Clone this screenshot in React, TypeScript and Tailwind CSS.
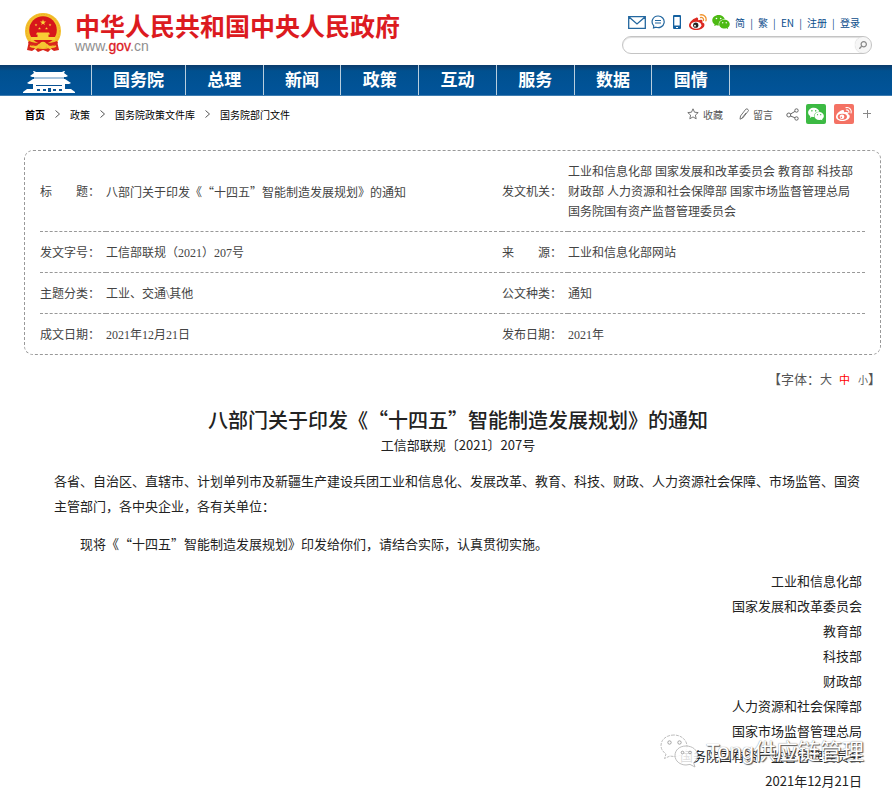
import React from "react";
import { FaSearch } from "react-icons/fa";
import { AiFillWechat } from "react-icons/ai";

const navItems = ["国务院", "总理", "新闻", "政策", "互动", "服务", "数据", "国情"];

const crumbs = ["首页", "政策", "国务院政策文件库", "国务院部门文件"];

const metaRows = [
  [
    "标　　题：",
    "八部门关于印发《“十四五”智能制造发展规划》的通知",
    "发文机关：",
    "工业和信息化部 国家发展和改革委员会 教育部 科技部\n财政部 人力资源和社会保障部 国家市场监督管理总局\n国务院国有资产监督管理委员会",
  ],
  ["发文字号：", "工信部联规（2021）207号", "来　　源：", "工业和信息化部网站"],
  ["主题分类：", "工业、交通\\其他", "公文种类：", "通知"],
  ["成文日期：", "2021年12月21日", "发布日期：", "2021年"],
];

const signers = [
  "工业和信息化部",
  "国家发展和改革委员会",
  "教育部",
  "科技部",
  "财政部",
  "人力资源和社会保障部",
  "国家市场监督管理总局",
  "国务院国有资产监督管理委员会",
  "2021年12月21日",
];

/* Sets full-width quotes in the CJK face while digits and spaces use the serif face. */
function Quoted({ text }: { text: string }) {
  return (
    <>
      {text.split(/([“”])/).map((part, i) =>
        part === "“" || part === "”" ? (
          <span key={i} className="font-['Noto_Sans_CJK_SC',sans-serif]">
            {part}
          </span>
        ) : (
          part
        ),
      )}
    </>
  );
}

function Emblem() {
  const star = "M0-1 .22-.31H.95L.36.12.59.81 0 .38-.59.81-.36.12-.95-.31H-.22Z";
  return (
    <svg viewBox="0 0 38 40" className="h-10 w-[38px]" aria-hidden="true">
      <path d="M5 28 3 37l5 1 3-2 3 3 5-2 5 2 3-3 3 2 5-1-2-9Z" fill="#d9261c" />
      <circle cx="19" cy="18" r="18" fill="#f3c02c" />
      <circle cx="19" cy="18" r="16.6" fill="none" stroke="#e9aa22" strokeWidth=".8" strokeDasharray="1.5 1.2" />
      <circle cx="19" cy="17" r="13.8" fill="#d7161b" />
      <path d={star} fill="#fbd83a" transform="translate(19 9.5) scale(3.2)" />
      <path d={star} fill="#fbd83a" transform="translate(12 12) scale(1.5)" />
      <path d={star} fill="#fbd83a" transform="translate(26 12) scale(1.5)" />
      <path d={star} fill="#fbd83a" transform="translate(15.5 15.5) scale(1.5)" />
      <path d={star} fill="#fbd83a" transform="translate(22.5 15.5) scale(1.5)" />
      <path d="M13 19.500h12l1 2h-1.500v2.500H31v3H7v-3h6.500v-2.500H12Z" fill="#f8cd35" />
      <path d="M5 28c6 3 22 3 28 0l1 2c-3 2-6 3-9 3l-6-2-6 2c-3 0-6-1-9-3Z" fill="#d9261c" />
      <path d="M6 33c4 2 8 1 9-1l4-2 4 2c1 2 5 3 9 1M11 36l4-3M27 36l-4-3" fill="none" stroke="#f6c632" strokeWidth="1.8" />
      <circle cx="19" cy="32" r="3.2" fill="#f6c632" />
    </svg>
  );
}

function Gate() {
  return (
    <svg viewBox="0 0 52 22" className="h-[22px] w-[52px]" aria-hidden="true">
      <path d="M10 0h1l2 1h26l2-1h1l-1 2 4 3-2 1H9L7 5l4-3Z" fill="#fff" />
      <path d="M11 6h30v2H11Z" fill="#a9c5dd" />
      <path d="M10 8h32l6 4-2 1H6l-2-1Z" fill="#fff" />
      <path d="M10 13h32v5H10Z" fill="#fff" />
      <path d="M4 18h44l4 3v1H0v-1Z" fill="#fff" />
      <path d="M13 14h26v1H13ZM14 18h3v2h-3ZM20 18h3v2h-3ZM25 17h3v4h-3ZM30 18h3v2h-3ZM36 18h3v2h-3Z" fill="#0a5293" />
    </svg>
  );
}

function Weibo({ mono, className }: { mono?: boolean; className: string }) {
  const body = mono ? "#fff" : "#dc2a22";
  const wave = mono ? "#fff" : "#f0922b";
  return (
    <svg viewBox="0 0 24 21" className={className} aria-hidden="true">
      <path
        d="M9 5c2-1 4 0 3 3 3-1 6-1 6 1 0 1-.5 1.500 0 2 2 .5 3 2 2.500 4C20 18.500 15 21 9.500 21 4 21 0 18.500 0 15 0 11 5 6 9 5Z"
        fill={body}
      />
      <ellipse cx="9.500" cy="14.800" rx="7" ry="4.600" fill={mono ? "#f47264" : "#fff"} />
      <circle cx="9" cy="14.800" r="3.500" fill={mono ? "#fff" : "#222"} />
      <circle cx="8" cy="15.500" r="1.200" fill={mono ? "#f47264" : "#fff"} />
      <path d="M15 1c5-1 9 3 7.500 8M15.500 4.500c2.500-.5 4.500 1.500 3.700 4" fill="none" stroke={wave} strokeWidth="1.700" strokeLinecap="round" />
    </svg>
  );
}

function Header() {
  return (
    <header className="flex h-[65px] items-start justify-between pr-5 pl-6">
      <a href="#" className="flex pt-[13px]">
        <Emblem />
        <span className="ml-[13px] block">
          <span className="block text-[25px] leading-[25px] font-bold text-[#dc1b1f]">中华人民共和国中央人民政府</span>
          <span className="block font-['Liberation_Sans',sans-serif] text-[14px] leading-4 text-[#8e8e8e]">
            www.<span className="text-[#dc1b1f] [-webkit-text-stroke:0.3px_#dc1b1f]">gov</span>.cn
          </span>
        </span>
      </a>
      <div className="w-[250px] pt-3.5">
        <div className="flex h-4 items-center pr-3 pl-1.5 text-[10px] text-[#0b4d8c]">
          <a href="#" aria-label="邮箱">
            <svg viewBox="0 0 18 13" className="h-[13px] w-[18px]" fill="none" stroke="#23679f" strokeWidth="1.300">
              <path d="M.7.7h16.600v11.600H.7ZM.7.7 9 8l8.300-7.300" />
            </svg>
          </a>
          <a href="#" aria-label="留言" className="ml-[5px]">
            <svg viewBox="0 0 14 14" className="h-3.5 w-3.5" fill="none" stroke="#23679f" strokeWidth="1.200">
              <path d="M7 1a6 5.800 0 1 1-2 11.200L2.500 13l.3-2.200A6 5.800 0 0 1 7 1ZM4 5.500h6M4 8h6" />
            </svg>
          </a>
          <a href="#" aria-label="手机" className="ml-[7px]">
            <svg viewBox="0 0 10 14" className="h-3.5 w-2.5">
              <path d="M2 0h6q1 0 1 1v12q0 1-1 1H2q-1 0-1-1V1q0-1 1-1Z" fill="#14609f" />
              <path d="M2.300 2h5.400v8.500H2.300ZM4 12h2v1H4Z" fill="#fff" />
            </svg>
          </a>
          <a href="#" aria-label="微博" className="ml-[7px]">
            <Weibo className="h-4 w-[18px]" />
          </a>
          <a href="#" aria-label="微信" className="ml-1">
            <AiFillWechat className="h-5 w-5 text-[#4dba13]" />
          </a>
          <div className="ml-1 flex flex-1 items-center justify-between whitespace-nowrap">
            <a href="#">简</a>
            <span>|</span>
            <a href="#">繁</a>
            <span>|</span>
            <a href="#">EN</a>
            <span>|</span>
            <a href="#">注册</a>
            <span>|</span>
            <a href="#">登录</a>
          </div>
        </div>
        <form className="mt-1.5 flex h-[18px] items-center rounded-full border border-[#c4c4c4] shadow-[inset_0_1px_1px_#dddddd]">
          <input aria-label="搜索" className="h-4 min-w-0 flex-1 bg-transparent pl-3 text-[11px] outline-none" />
          <button type="button" aria-label="搜索" className="flex h-4 w-4 items-center justify-center rounded-full bg-[#f6f6f6] shadow-[0_0_1px_#bbbbbb]">
            <FaSearch className="h-2 w-2 -scale-x-100 text-[#888888]" />
          </button>
        </form>
      </div>
    </header>
  );
}

function Nav() {
  return (
    <nav className="flex h-[31px] border-b border-[#3d7cb0] bg-linear-to-b from-[#0a3b6b] via-[#00508f] via-20% to-[#02549a]">
      <a href="#" aria-label="中国政府网" className="flex w-[92px] items-center border-r border-[#b8cede] pt-1 pl-[23px]">
        <Gate />
      </a>
      <div className="grid w-[638px] grid-cols-[94px_repeat(7,1fr)]">
        {navItems.map((item) => (
          <a key={item} href="#" className="border-r border-[#b8cede] text-center text-[17px] leading-[28px] font-bold whitespace-nowrap text-white">
            {item}
          </a>
        ))}
      </div>
    </nav>
  );
}

function Toolbar() {
  return (
    <div className="flex h-9 items-center justify-between pr-5 pl-[25px] text-[10px]">
      <ol className="flex items-center gap-2.5 text-black">
        {crumbs.map((c, i) => (
          <li key={c} className="flex items-center gap-2.5">
            {i > 0 && (
              <svg viewBox="0 0 5 8" className="h-2 w-[5px]" fill="none" stroke="#555" strokeWidth="1">
                <path d="m.5.5 4 3.500-4 3.500" />
              </svg>
            )}
            <a href="#" className={i === 0 ? "font-bold" : ""}>
              {c}
            </a>
          </li>
        ))}
      </ol>
      <div className="flex items-center text-[#555555]">
        <button type="button" className="flex items-center gap-1">
          <svg viewBox="0 0 12 12" className="h-3 w-3" fill="none" stroke="#666" strokeWidth=".9" strokeLinejoin="round">
            <path d="m6 .8 1.500 3.400 3.700.4-2.800 2.500.8 3.700L6 8.900l-3.200 1.900.8-3.700L.8 4.600l3.700-.4Z" />
          </svg>
          收藏
        </button>
        <button type="button" className="ml-4 flex items-center gap-1">
          <svg viewBox="0 0 10 12" className="h-3 w-2.5" fill="none" stroke="#666" strokeWidth=".9" strokeLinejoin="round">
            <path d="M1.500 8 6.800 1.200Q8 .3 9 1.500T9 3.300L3.700 10 1 11.200ZM3 10 7 5" />
          </svg>
          留言
        </button>
        <button type="button" aria-label="分享" className="ml-[13px]">
          <svg viewBox="0 0 13 13" className="h-[13px] w-[13px]" fill="none" stroke="#666" strokeWidth="1">
            <circle cx="2.800" cy="7" r="2" />
            <circle cx="10.500" cy="2.500" r="1.700" />
            <circle cx="10.500" cy="10.500" r="1.700" />
            <path d="m4.500 6 4.500-2.600M4.500 8 9 9.800" />
          </svg>
        </button>
        <button type="button" aria-label="微信" className="ml-[7px] flex h-5 w-5 items-center justify-center rounded-[2px] bg-[#3cba43]">
          <AiFillWechat className="h-[18px] w-[18px] text-white" />
        </button>
        <button type="button" aria-label="微博" className="ml-2 flex h-5 w-5 items-center justify-center rounded-[2px] bg-[#f47264]">
          <Weibo mono className="h-3.5 w-4" />
        </button>
        <button type="button" aria-label="更多" className="ml-2">
          <svg viewBox="0 0 10 10" className="h-2.5 w-2.5" stroke="#888" strokeWidth="1">
            <path d="M1 4.500h8M5.500 1v8" />
          </svg>
        </button>
      </div>
    </div>
  );
}

function MetaTable() {
  return (
    <div className="mt-[18px] mr-[11px] ml-6 rounded-[9px] border border-dashed border-[#999999] px-[15px]">
      <table className="w-full table-fixed border-separate border-spacing-0 font-['Liberation_Serif','Noto_Sans_CJK_SC',serif] text-[12px] leading-5 text-[#444444]">
        <colgroup>
          <col className="w-[66px]" />
          <col className="w-[48%]" />
          <col className="w-[66px]" />
          <col />
        </colgroup>
        <tbody>
          {metaRows.map((row, r) => (
            <tr key={row[0]}>
              {row.map((cell, c) => {
                const Tag = c % 2 === 0 ? "th" : "td";
                return (
                  <Tag
                    key={c}
                    className={
                      "pt-[11px] pb-[9px] text-left align-middle font-normal " +
                      (c % 2 === 0 ? "whitespace-nowrap " : "whitespace-pre-line ") +
                      (r < metaRows.length - 1 ? "border-b border-dashed border-[#999999]" : "")
                    }
                  >
                    <Quoted text={cell} />
                  </Tag>
                );
              })}
            </tr>
          ))}
        </tbody>
      </table>
    </div>
  );
}

function Watermark() {
  return (
    <div className="pointer-events-none absolute -right-0.5 bottom-[23px] flex items-center">
      <svg viewBox="0 0 38 36" className="h-9 w-[38px]" aria-hidden="true">
        <g fill="#fff" fillOpacity=".85" stroke="#b5b5b5" strokeWidth=".9">
          <path d="M14 1C6.500 1 1 5.500 1 11.500c0 3.500 2 6.500 5 8.500l-1.500 4.500L10 22c4 1 9 .5 13-2 4-3 5-8 3-12-2-4.500-7-7-12-7Z" strokeDasharray="3 1" />
          <path d="M26 12c-6.500 0-11 4-11 9.500S20 31 26 31l4-.6 5 2.600-1.400-4.400c2.400-2 3.900-4.200 3.900-7.100 0-5.500-5-9.500-11.500-9.500Z" />
        </g>
        <g fill="#fff" stroke="#999" strokeWidth=".9">
          <circle cx="9.500" cy="8.500" r="1.700" />
          <circle cx="19.500" cy="8.500" r="1.700" />
          <circle cx="22.500" cy="18.500" r="1.300" />
          <circle cx="30" cy="18.500" r="1.300" />
        </g>
      </svg>
      <span className="ml-2 font-['Liberation_Sans','Noto_Sans_CJK_SC',sans-serif] text-[22px] leading-6 whitespace-nowrap text-white [text-shadow:1px_1px_1px_#555555,0_0_1px_#777777]">
        Tong供应链管理
      </span>
    </div>
  );
}

function Article() {
  return (
    <article className="pr-[30px] pl-[54px] text-[13px] leading-[25px] text-[#222222]">
      <h1 className="mt-4 text-center text-[20px] leading-[30px] font-medium">八部门关于印发《“十四五”智能制造发展规划》的通知</h1>
      <p className="text-center leading-5">工信部联规〔2021〕207号</p>
      <p className="mt-[13px]">
        各省、自治区、直辖市、计划单列市及新疆生产建设兵团工业和信息化、发展改革、教育、科技、财政、人力资源社会保障、市场监管、国资主管部门，各中央企业，各有关单位：
      </p>
      <p className="mt-[13px] indent-[26px]">现将《“十四五”智能制造发展规划》印发给你们，请结合实际，认真贯彻实施。</p>
      <div className="relative mt-3 text-right">
        {signers.map((s) => (
          <p key={s}>{s}</p>
        ))}
        <Watermark />
      </div>
    </article>
  );
}

export default function App() {
  return (
    <div lang="zh-CN" className="w-full overflow-hidden bg-white font-['Noto_Sans_CJK_SC',sans-serif] [text-spacing-trim:space-all]">
      <Header />
      <Nav />
      <Toolbar />
      <MetaTable />
      <div className="mt-[14px] flex h-5 items-center justify-end pr-[11px] text-[13px] text-[#555555]">
        <span>【字体：</span>
        <button type="button" className="mr-[7px] text-[12px]">大</button>
        <button type="button" className="mr-2 text-[11px] text-[#ff0000]">中</button>
        <button type="button" className="text-[10px]">小</button>
        <span>】</span>
      </div>
      <Article />
    </div>
  );
}
